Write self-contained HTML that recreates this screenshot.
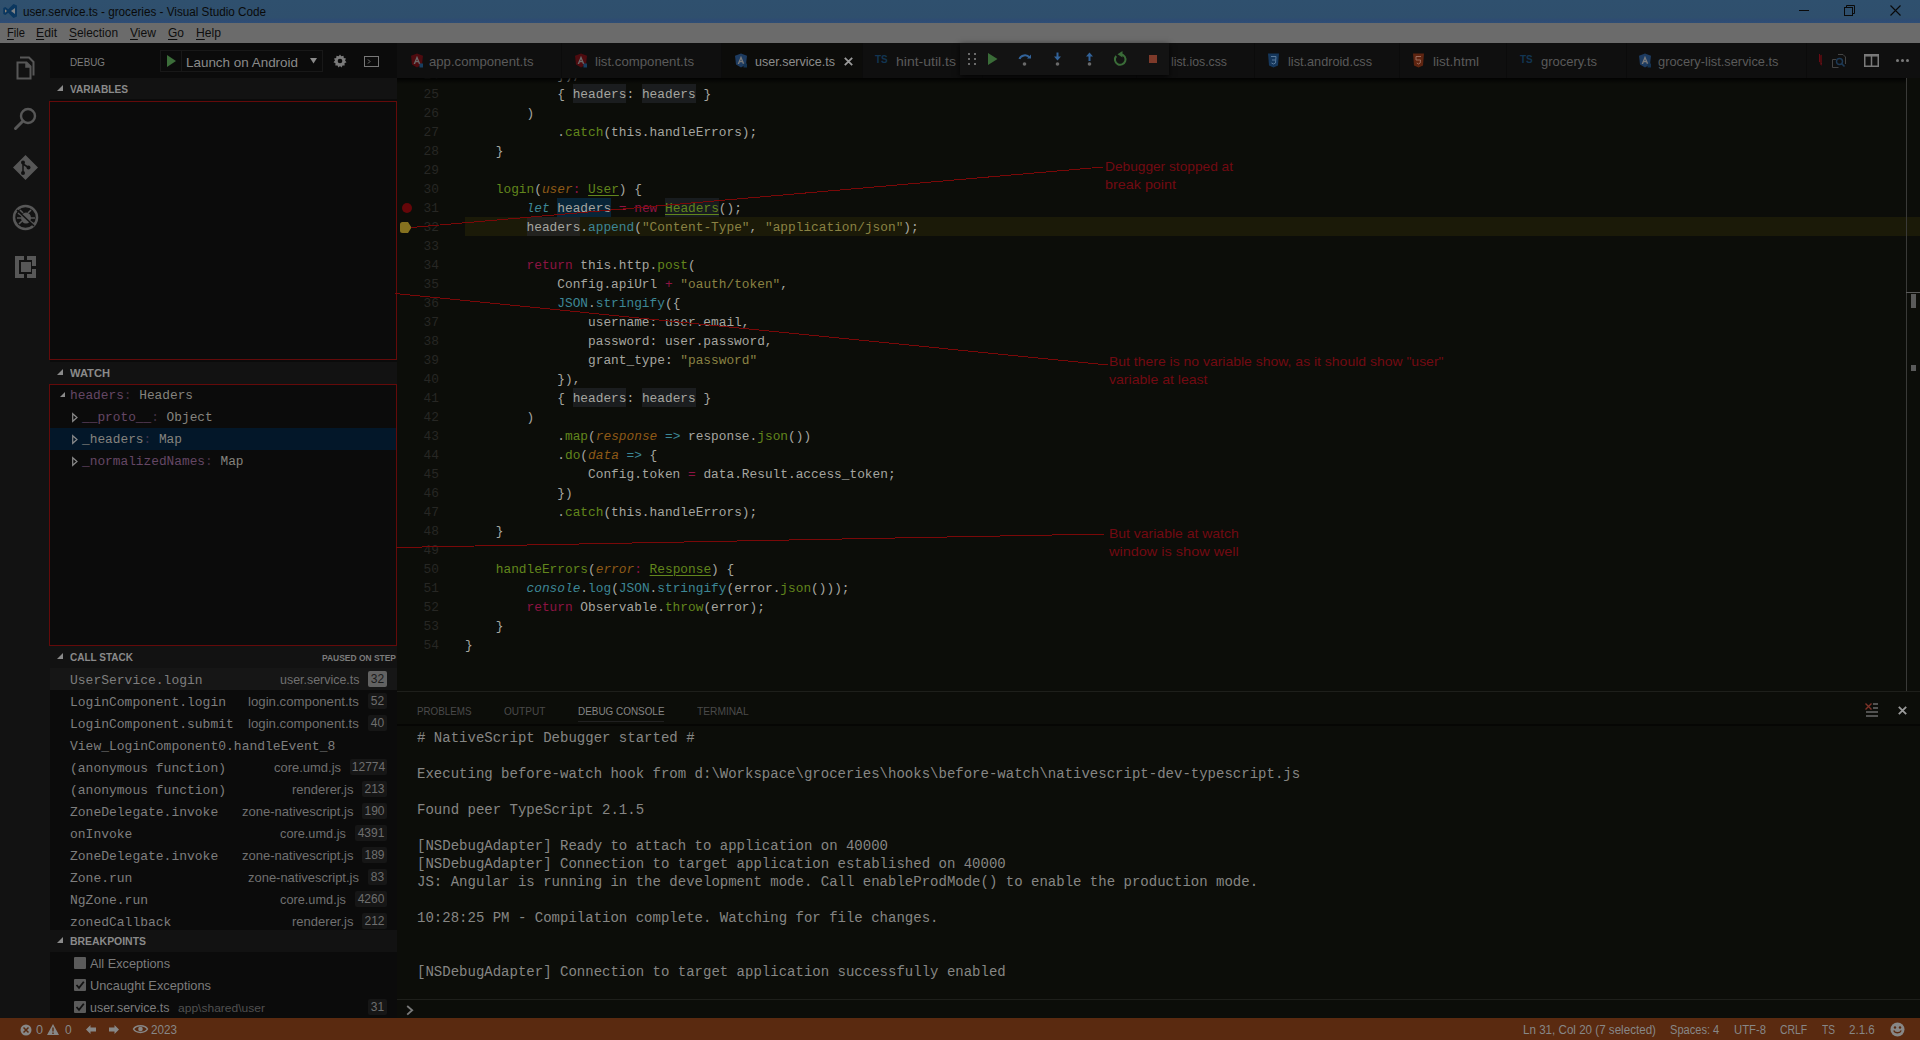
<!DOCTYPE html>
<html><head><meta charset="utf-8"><style>
*{margin:0;padding:0;box-sizing:border-box}
html,body{width:1920px;height:1040px;overflow:hidden;background:#0c0c0a;font-family:"Liberation Sans",sans-serif}
.a{position:absolute}
#title{left:0;top:0;width:1920px;height:23px;background:linear-gradient(#2f506e,#2f4f6d 75%,#2e4b72 88%,#2f4e76)}
#menu{left:0;top:23px;width:1920px;height:20px;background:#6b6b6b}
#act{left:0;top:43px;width:50px;height:975px;background:#121212}
#side{left:50px;top:43px;width:347px;height:975px;background:#0b0b0b}
#editor{left:397px;top:78px;width:1523px;height:613px;background:#0c0d09;overflow:hidden}
#tabs{left:397px;top:43px;width:1523px;height:35px;background:#0f0f0f}
#panel{left:397px;top:691px;width:1523px;height:327px;background:#0c0d09;border-top:1px solid #1e1f1b}
#status{left:0;top:1018px;width:1920px;height:22px;background:#5a2a10}
.code{font-family:"Liberation Mono",monospace;font-size:12.82px;line-height:19px;white-space:pre;color:#a6a6a0}
.ln{font-family:"Liberation Mono",monospace;font-size:12.82px;line-height:19px;color:#272724;text-align:right;width:40px;white-space:pre}
.g{color:#62861c}.p{color:#8e1443}.b{color:#3d8796}.bi{color:#3d8796;font-style:italic}
.o{color:#8f5a17;font-style:italic}.y{color:#8a8243}
.gu{color:#62861c;text-decoration:underline;text-underline-offset:2px}
.guh{color:#62861c;text-decoration:underline;text-underline-offset:2px}
.hl{}.hl2{}.sel{}
.sh{font-family:"Liberation Sans",sans-serif;font-weight:bold;font-size:11px;color:#8a8a8a;line-height:14px;white-space:pre}
.cs{font-family:"Liberation Mono",monospace;font-size:13px;color:#7e7e7e;line-height:22px;white-space:pre}
.fn{font-family:"Liberation Sans",sans-serif;font-size:12.5px;color:#7e7e7e;line-height:22px;white-space:pre}
.badge{font-family:"Liberation Sans",sans-serif;font-size:12px;color:#6e6e6e;background:#161616;line-height:16px;text-align:center;border-radius:2px;white-space:pre}
.tab{font-family:"Liberation Sans",sans-serif;font-size:13px;color:#6e6e6e;line-height:16px;white-space:pre}
.con{font-family:"Liberation Mono",monospace;font-size:14.02px;color:#868684;line-height:18px;white-space:pre}
.st{font-family:"Liberation Sans",sans-serif;font-size:12px;color:#8e8e8e;line-height:16px;white-space:pre}
.ann{font-family:"Liberation Sans",sans-serif;font-size:13px;color:#7a0c14;line-height:18px;white-space:pre}
.wt{font-family:"Liberation Mono",monospace;font-size:12.82px;line-height:22px;white-space:pre}
.wn{color:#654765}.wv{color:#85837e}
.mn{font-family:"Liberation Sans",sans-serif;font-size:12px;color:#111;line-height:16px;white-space:pre}
.tb{font-family:"Liberation Sans",sans-serif;font-size:12px;color:#0c0c0c;line-height:16px;white-space:pre}
svg{position:absolute;overflow:visible}
</style></head><body>
<div id="title" class="a"></div>
<svg style="left:3px;top:4px" width="14" height="14" viewBox="0 0 14 14"><path d="M10.5 0 L14 1.5 V12.5 L10.5 14 L5.2 8.8 L2.3 11 L0.3 10 V4 L2.3 3 L5.2 5.2 Z" fill="#0b375f"/><path d="M12 4 V10 L8 7 Z" fill="#7f8285"/><path d="M2 5.3 V8.7 L4 7 Z" fill="#8a8276"/></svg>
<div class="a" style="left:22.50px;top:5.80px;font-family:Liberation Sans,sans-serif;font-size:12px;line-height:12px;font-weight:normal;color:#0a0a0a;white-space:pre;transform:scaleX(0.9750);transform-origin:0 0;">user.service.ts - groceries - Visual Studio Code</div>
<div class="a" style="left:1799px;top:10px;width:10px;height:1px;background:#0a0a0a"></div>
<svg style="left:1844px;top:5px" width="11" height="11"><rect x="0.5" y="2.5" width="8" height="8" fill="none" stroke="#0a0a0a"/><path d="M2.5 2.5 V0.5 H10.5 V8.5 H8.5" fill="none" stroke="#0a0a0a"/></svg>
<svg style="left:1890px;top:5px" width="11" height="11"><path d="M0.5 0.5 L10.5 10.5 M10.5 0.5 L0.5 10.5" stroke="#0a0a0a" stroke-width="1.1"/></svg>
<div id="menu" class="a"></div>
<div class="a" style="left:6.50px;top:26.80px;font-family:Liberation Sans,sans-serif;font-size:12px;line-height:12px;font-weight:normal;color:#0e0e0e;white-space:pre;transform:scaleX(0.9309);transform-origin:0 0;"><u style="text-decoration-thickness:1px;text-underline-offset:2px">F</u>ile</div>
<div class="a" style="left:35.50px;top:26.80px;font-family:Liberation Sans,sans-serif;font-size:12px;line-height:12px;font-weight:normal;color:#0e0e0e;white-space:pre;transform:scaleX(1.0156);transform-origin:0 0;"><u style="text-decoration-thickness:1px;text-underline-offset:2px">E</u>dit</div>
<div class="a" style="left:68.50px;top:26.80px;font-family:Liberation Sans,sans-serif;font-size:12px;line-height:12px;font-weight:normal;color:#0e0e0e;white-space:pre;transform:scaleX(0.9926);transform-origin:0 0;"><u style="text-decoration-thickness:1px;text-underline-offset:2px">S</u>election</div>
<div class="a" style="left:129.50px;top:26.80px;font-family:Liberation Sans,sans-serif;font-size:12px;line-height:12px;font-weight:normal;color:#0e0e0e;white-space:pre;transform:scaleX(1.0080);transform-origin:0 0;"><u style="text-decoration-thickness:1px;text-underline-offset:2px">V</u>iew</div>
<div class="a" style="left:167.50px;top:26.80px;font-family:Liberation Sans,sans-serif;font-size:12px;line-height:12px;font-weight:normal;color:#0e0e0e;white-space:pre;transform:scaleX(0.9995);transform-origin:0 0;"><u style="text-decoration-thickness:1px;text-underline-offset:2px">G</u>o</div>
<div class="a" style="left:195.50px;top:26.80px;font-family:Liberation Sans,sans-serif;font-size:12px;line-height:12px;font-weight:normal;color:#0e0e0e;white-space:pre;transform:scaleX(1.0129);transform-origin:0 0;"><u style="text-decoration-thickness:1px;text-underline-offset:2px">H</u>elp</div>
<div id="act" class="a"></div>
<svg style="left:16px;top:56px" width="20" height="24" viewBox="0 0 20 24"><path d="M4 1.5 H13 L17.5 6 V19.5" fill="none" stroke="#575757" stroke-width="2"/><path d="M1.5 6.5 H10.5 L14.5 10.5 V22.5 H1.5 Z" fill="none" stroke="#575757" stroke-width="2"/><path d="M10 6 V11 H15" fill="#575757" stroke="#575757" stroke-width="1.5"/></svg>
<svg style="left:13px;top:106px" width="25" height="25" viewBox="0 0 25 25"><circle cx="15" cy="10" r="7" fill="none" stroke="#575757" stroke-width="2.4"/><path d="M10 15 L2.5 22.5" stroke="#575757" stroke-width="3" stroke-linecap="round"/></svg>
<svg style="left:12px;top:154px" width="27" height="27" viewBox="0 0 27 27"><path d="M13.5 1 L26 13.5 L13.5 26 L1 13.5 Z" fill="#575757"/><circle cx="11" cy="8.5" r="2" fill="#121212"/><circle cx="11" cy="19" r="2" fill="#121212"/><circle cx="16.5" cy="13.5" r="2" fill="#121212"/><path d="M11 8.5 V19 M11 10 L16.5 13.5" stroke="#121212" stroke-width="1.5"/></svg>
<svg style="left:12px;top:204px" width="27" height="27" viewBox="0 0 27 27"><circle cx="13.5" cy="13.5" r="11.5" fill="none" stroke="#575757" stroke-width="2.5"/><ellipse cx="14" cy="14" rx="5" ry="5.5" fill="#575757"/><path d="M6 9 L22 20 M8 6 L11 9 M19 6 L16 9 M5 14 H9 M18 14 H23 M7 20 L10 17" stroke="#575757" stroke-width="1.6"/><path d="M5 6 L22 22" stroke="#121212" stroke-width="1.5"/></svg>
<svg style="left:14px;top:255px" width="23" height="24" viewBox="0 0 23 24"><path d="M1 1 H10 V5 H5 V19 H10 V23 H1 Z" fill="#575757"/><path d="M13 1 H22 V11 H18 V5 H13 Z M13 19 H18 V14 H22 V23 H13 Z" fill="#575757"/><rect x="7" y="7" width="10" height="10" fill="#575757"/></svg>
<div id="side" class="a"></div>
<div class="a" style="left:69.50px;top:56.65px;font-family:Liberation Sans,sans-serif;font-size:11px;line-height:11px;font-weight:normal;color:#7d7d7d;white-space:pre;transform:scaleX(0.8947);transform-origin:0 0;">DEBUG</div>
<div class="a" style="left:160px;top:50px;width:163px;height:22px;border:1px solid #181818"></div>
<div class="a" style="left:181px;top:51px;width:1px;height:20px;background:#181818"></div>
<svg style="left:167px;top:55px" width="10" height="12"><path d="M0 0 L9 6 L0 12 Z" fill="#3c6e3a"/></svg>
<div class="a" style="left:185.50px;top:55.95px;font-family:Liberation Sans,sans-serif;font-size:13px;line-height:13px;font-weight:normal;color:#8a8a8a;white-space:pre;transform:scaleX(1.0329);transform-origin:0 0;">Launch on Android</div>
<svg style="left:310px;top:58px" width="7" height="6"><path d="M0 0 H7 L3.5 5.5 Z" fill="#8a8a8a"/></svg>
<svg style="left:333px;top:54px" width="14" height="14" viewBox="0 0 14 14"><path d="M7 0.5 L8.3 2.3 L10.5 1.7 L10.8 3.9 L13 4.5 L12 6.5 L13.5 8.2 L11.5 9.3 L11.7 11.5 L9.5 11.6 L8.5 13.5 L7 12 L5.5 13.5 L4.5 11.6 L2.3 11.5 L2.5 9.3 L0.5 8.2 L2 6.5 L1 4.5 L3.2 3.9 L3.5 1.7 L5.7 2.3 Z" fill="#7a7a7a"/><circle cx="7" cy="7" r="2.3" fill="#0b0b0b"/></svg>
<svg style="left:364px;top:56px" width="15" height="11"><rect x="0.5" y="0.5" width="14" height="10" fill="none" stroke="#777" stroke-width="1"/><path d="M4 3.5 L6 5.5 L4 7.5" fill="none" stroke="#777"/></svg>
<div class="a" style="left:50px;top:78px;width:347px;height:21px;background:#121212"></div>
<svg style="left:57px;top:85px" width="7" height="7"><path d="M6 0 V6 H0 Z" fill="#8a8a8a"/></svg>
<div class="a" style="left:69.50px;top:83.65px;font-family:Liberation Sans,sans-serif;font-size:11px;line-height:11px;font-weight:bold;color:#8a8a8a;white-space:pre;transform:scaleX(0.9243);transform-origin:0 0;">VARIABLES</div>
<div class="a" style="left:49px;top:101px;width:348px;height:259px;border:1px solid #640a0a"></div>
<div class="a" style="left:50px;top:362px;width:347px;height:22px;background:#121212"></div>
<svg style="left:57px;top:369px" width="7" height="7"><path d="M6 0 V6 H0 Z" fill="#8a8a8a"/></svg>
<div class="a" style="left:69.50px;top:367.65px;font-family:Liberation Sans,sans-serif;font-size:11px;line-height:11px;font-weight:bold;color:#8a8a8a;white-space:pre;transform:scaleX(1.0124);transform-origin:0 0;">WATCH</div>
<div class="a" style="left:49px;top:384px;width:348px;height:262px;border:1px solid #640a0a"></div>
<div class="a" style="left:50px;top:428px;width:346px;height:22px;background:#031729"></div>
<svg style="left:60px;top:392px" width="6" height="6"><path d="M5 0 V5 H0 Z" fill="#8a8a8a"/></svg>
<div class="a wt" style="left:70px;top:385px;"><span class="wn">headers</span><span class="wn" style="opacity:.6">:</span> <span class="wv">Headers</span></div>
<svg style="left:72px;top:413px" width="6" height="9"><path d="M0.7 0.7 L5 4.5 L0.7 8.3 Z" fill="none" stroke="#8a8a8a" stroke-width="1.2"/></svg>
<div class="a wt" style="left:82px;top:407px;"><span class="wn">__proto__</span><span class="wn" style="opacity:.6">:</span> <span class="wv">Object</span></div>
<svg style="left:72px;top:435px" width="6" height="9"><path d="M0.7 0.7 L5 4.5 L0.7 8.3 Z" fill="none" stroke="#8a8a8a" stroke-width="1.2"/></svg>
<div class="a wt" style="left:82px;top:429px;"><span class="wv">_headers</span><span class="wn" style="opacity:.6">:</span> <span class="wv">Map</span></div>
<svg style="left:72px;top:457px" width="6" height="9"><path d="M0.7 0.7 L5 4.5 L0.7 8.3 Z" fill="none" stroke="#8a8a8a" stroke-width="1.2"/></svg>
<div class="a wt" style="left:82px;top:451px;"><span class="wn">_normalizedNames</span><span class="wn" style="opacity:.6">:</span> <span class="wv">Map</span></div>
<div class="a" style="left:50px;top:646px;width:347px;height:22px;background:#121212"></div>
<svg style="left:57px;top:653px" width="7" height="7"><path d="M6 0 V6 H0 Z" fill="#8a8a8a"/></svg>
<div class="a" style="left:69.50px;top:651.65px;font-family:Liberation Sans,sans-serif;font-size:11px;line-height:11px;font-weight:bold;color:#8a8a8a;white-space:pre;transform:scaleX(0.9097);transform-origin:0 0;">CALL STACK</div>
<div class="a" style="left:321.50px;top:652.92px;font-family:Liberation Sans,sans-serif;font-size:9.5px;line-height:9.5px;font-weight:bold;color:#7c7c7c;white-space:pre;transform:scaleX(0.8891);transform-origin:0 0;">PAUSED ON STEP</div>
<div class="a" style="left:50px;top:668px;width:347px;height:22px;background:#161616"></div>
<div class="a cs" style="left:70px;top:670px;">UserService.login</div>
<div class="a badge" style="left:368px;top:671px;width:19px;height:16px;background:#626262;color:#1a1a1a;line-height:17px">32</div>
<div class="a" style="left:279.50px;top:673.45px;font-family:Liberation Sans,sans-serif;font-size:13px;line-height:13px;font-weight:normal;color:#707070;white-space:pre;transform:scaleX(0.9568);transform-origin:0 0;">user.service.ts</div>
<div class="a cs" style="left:70px;top:692px;">LoginComponent.login</div>
<div class="a badge" style="left:368px;top:693px;width:19px;height:16px;background:#161616;color:#6e6e6e;line-height:17px">52</div>
<div class="a" style="left:248.10px;top:695.45px;font-family:Liberation Sans,sans-serif;font-size:13px;line-height:13px;font-weight:normal;color:#707070;white-space:pre;transform:scaleX(1.0163);transform-origin:0 0;">login.component.ts</div>
<div class="a cs" style="left:70px;top:714px;">LoginComponent.submit</div>
<div class="a badge" style="left:368px;top:715px;width:19px;height:16px;background:#161616;color:#6e6e6e;line-height:17px">40</div>
<div class="a" style="left:248.10px;top:717.45px;font-family:Liberation Sans,sans-serif;font-size:13px;line-height:13px;font-weight:normal;color:#707070;white-space:pre;transform:scaleX(1.0163);transform-origin:0 0;">login.component.ts</div>
<div class="a cs" style="left:70px;top:736px;">View_LoginComponent0.handleEvent_8</div>
<div class="a cs" style="left:70px;top:758px;">(anonymous function)</div>
<div class="a badge" style="left:350px;top:759px;width:37px;height:16px;background:#161616;color:#6e6e6e;line-height:17px">12774</div>
<div class="a" style="left:274.00px;top:761.45px;font-family:Liberation Sans,sans-serif;font-size:13px;line-height:13px;font-weight:normal;color:#707070;white-space:pre;transform:scaleX(0.9971);transform-origin:0 0;">core.umd.js</div>
<div class="a cs" style="left:70px;top:780px;">(anonymous function)</div>
<div class="a badge" style="left:362px;top:781px;width:25px;height:16px;background:#161616;color:#6e6e6e;line-height:17px">213</div>
<div class="a" style="left:291.50px;top:783.45px;font-family:Liberation Sans,sans-serif;font-size:13px;line-height:13px;font-weight:normal;color:#707070;white-space:pre;transform:scaleX(1.0013);transform-origin:0 0;">renderer.js</div>
<div class="a cs" style="left:70px;top:802px;">ZoneDelegate.invoke</div>
<div class="a badge" style="left:362px;top:803px;width:25px;height:16px;background:#161616;color:#6e6e6e;line-height:17px">190</div>
<div class="a" style="left:241.50px;top:805.45px;font-family:Liberation Sans,sans-serif;font-size:13px;line-height:13px;font-weight:normal;color:#707070;white-space:pre;transform:scaleX(1.0021);transform-origin:0 0;">zone-nativescript.js</div>
<div class="a cs" style="left:70px;top:824px;">onInvoke</div>
<div class="a badge" style="left:355px;top:825px;width:32px;height:16px;background:#161616;color:#6e6e6e;line-height:17px">4391</div>
<div class="a" style="left:280.10px;top:827.45px;font-family:Liberation Sans,sans-serif;font-size:13px;line-height:13px;font-weight:normal;color:#707070;white-space:pre;transform:scaleX(0.9808);transform-origin:0 0;">core.umd.js</div>
<div class="a cs" style="left:70px;top:846px;">ZoneDelegate.invoke</div>
<div class="a badge" style="left:362px;top:847px;width:25px;height:16px;background:#161616;color:#6e6e6e;line-height:17px">189</div>
<div class="a" style="left:241.50px;top:849.45px;font-family:Liberation Sans,sans-serif;font-size:13px;line-height:13px;font-weight:normal;color:#707070;white-space:pre;transform:scaleX(1.0021);transform-origin:0 0;">zone-nativescript.js</div>
<div class="a cs" style="left:70px;top:868px;">Zone.run</div>
<div class="a badge" style="left:368px;top:869px;width:19px;height:16px;background:#161616;color:#6e6e6e;line-height:17px">83</div>
<div class="a" style="left:248.10px;top:871.45px;font-family:Liberation Sans,sans-serif;font-size:13px;line-height:13px;font-weight:normal;color:#707070;white-space:pre;transform:scaleX(0.9967);transform-origin:0 0;">zone-nativescript.js</div>
<div class="a cs" style="left:70px;top:890px;">NgZone.run</div>
<div class="a badge" style="left:355px;top:891px;width:32px;height:16px;background:#161616;color:#6e6e6e;line-height:17px">4260</div>
<div class="a" style="left:280.10px;top:893.45px;font-family:Liberation Sans,sans-serif;font-size:13px;line-height:13px;font-weight:normal;color:#707070;white-space:pre;transform:scaleX(0.9808);transform-origin:0 0;">core.umd.js</div>
<div class="a cs" style="left:70px;top:912px;">zonedCallback</div>
<div class="a badge" style="left:362px;top:913px;width:25px;height:16px;background:#161616;color:#6e6e6e;line-height:17px">212</div>
<div class="a" style="left:291.50px;top:915.45px;font-family:Liberation Sans,sans-serif;font-size:13px;line-height:13px;font-weight:normal;color:#707070;white-space:pre;transform:scaleX(1.0013);transform-origin:0 0;">renderer.js</div>
<div class="a" style="left:50px;top:930px;width:347px;height:22px;background:#121212"></div>
<svg style="left:57px;top:937px" width="7" height="7"><path d="M6 0 V6 H0 Z" fill="#8a8a8a"/></svg>
<div class="a" style="left:69.50px;top:935.65px;font-family:Liberation Sans,sans-serif;font-size:11px;line-height:11px;font-weight:bold;color:#8a8a8a;white-space:pre;transform:scaleX(0.9492);transform-origin:0 0;">BREAKPOINTS</div>
<div class="a" style="left:74px;top:957px;width:12px;height:12px;background:#5b5b5b;border-radius:1px"></div>
<div class="a" style="left:89.50px;top:956.95px;font-family:Liberation Sans,sans-serif;font-size:13px;line-height:13px;font-weight:normal;color:#7c7c7c;white-space:pre;transform:scaleX(0.9798);transform-origin:0 0;">All Exceptions</div>
<div class="a" style="left:74px;top:979px;width:12px;height:12px;background:#5b5b5b;border-radius:1px"></div>
<svg style="left:74px;top:979px" width="12" height="12"><path d="M2.5 6 L5 8.8 L9.8 2.8" fill="none" stroke="#111" stroke-width="1.8"/></svg>
<div class="a" style="left:89.50px;top:978.95px;font-family:Liberation Sans,sans-serif;font-size:13px;line-height:13px;font-weight:normal;color:#7c7c7c;white-space:pre;transform:scaleX(0.9849);transform-origin:0 0;">Uncaught Exceptions</div>
<div class="a" style="left:74px;top:1001px;width:12px;height:12px;background:#5b5b5b;border-radius:1px"></div>
<svg style="left:74px;top:1001px" width="12" height="12"><path d="M2.5 6 L5 8.8 L9.8 2.8" fill="none" stroke="#111" stroke-width="1.8"/></svg>
<div class="a" style="left:89.50px;top:1000.95px;font-family:Liberation Sans,sans-serif;font-size:13px;line-height:13px;font-weight:normal;color:#7c7c7c;white-space:pre;transform:scaleX(0.9568);transform-origin:0 0;">user.service.ts</div>
<div class="a" style="left:177.50px;top:1003.23px;font-family:Liberation Sans,sans-serif;font-size:11.5px;line-height:11.5px;font-weight:normal;color:#505050;white-space:pre;transform:scaleX(1.0468);transform-origin:0 0;">app\shared\user</div>
<div class="a badge" style="left:368px;top:999px;width:19px;height:16px;line-height:17px">31</div>
<div id="tabs" class="a"></div>
<div class="a" style="left:397px;top:43px;width:165px;height:35px;background:#0f0f0f;border-right:1px solid #0b0b0b;overflow:hidden"></div>
<svg style="left:410px;top:53px" width="14" height="15" viewBox="0 0 14 15"><path d="M7 0.5 L13 2.7 L12 11.5 L7 14.5 L2 11.5 L1 2.7 Z" fill="#4e0b0f"/><path d="M7 2.8 L3.6 11 H5.1 L5.8 9.2 H8.2 L8.9 11 H10.4 Z M6.3 8 L7 6.2 L7.7 8 Z" fill="#6a6a6a"/><path d="M9.5 10.5 h3.5 v4 h-3.5z" fill="#173e60"/></svg>
<div class="a" style="left:429.00px;top:54.52px;font-family:Liberation Sans,sans-serif;font-size:13.5px;line-height:13.5px;font-weight:normal;color:#5a5a5a;white-space:pre;transform:scaleX(0.9737);transform-origin:0 0;">app.component.ts</div>
<div class="a" style="left:562px;top:43px;width:160px;height:35px;background:#0f0f0f;border-right:1px solid #0b0b0b;overflow:hidden"></div>
<svg style="left:574px;top:53px" width="14" height="15" viewBox="0 0 14 15"><path d="M7 0.5 L13 2.7 L12 11.5 L7 14.5 L2 11.5 L1 2.7 Z" fill="#4e0b0f"/><path d="M7 2.8 L3.6 11 H5.1 L5.8 9.2 H8.2 L8.9 11 H10.4 Z M6.3 8 L7 6.2 L7.7 8 Z" fill="#6a6a6a"/><path d="M9.5 10.5 h3.5 v4 h-3.5z" fill="#173e60"/></svg>
<div class="a" style="left:594.50px;top:54.52px;font-family:Liberation Sans,sans-serif;font-size:13.5px;line-height:13.5px;font-weight:normal;color:#5a5a5a;white-space:pre;transform:scaleX(0.9773);transform-origin:0 0;">list.component.ts</div>
<div class="a" style="left:722px;top:43px;width:141px;height:35px;background:#0c0c0a;border-right:1px solid #0b0b0b;overflow:hidden"></div>
<svg style="left:734px;top:53px" width="14" height="15" viewBox="0 0 14 15"><path d="M7 0.5 L13 2.7 L12 11.5 L7 14.5 L2 11.5 L1 2.7 Z" fill="#1d3b60"/><path d="M7 2.8 L3.6 11 H5.1 L5.8 9.2 H8.2 L8.9 11 H10.4 Z M6.3 8 L7 6.2 L7.7 8 Z" fill="#7a7a7a"/><path d="M9.5 10.5 h3.5 v4 h-3.5z" fill="#143352"/></svg>
<div class="a" style="left:754.50px;top:54.52px;font-family:Liberation Sans,sans-serif;font-size:13.5px;line-height:13.5px;font-weight:normal;color:#8c8c8c;white-space:pre;transform:scaleX(0.9272);transform-origin:0 0;">user.service.ts</div>
<div class="a" style="left:863px;top:43px;width:120px;height:35px;background:#0f0f0f;border-right:1px solid #0b0b0b;overflow:hidden"></div>
<div class="a" style="left:875px;top:55px;font-family:Liberation Sans,sans-serif;font-weight:bold;font-size:10px;color:#123552;line-height:10px">TS</div>
<div class="a" style="left:895.50px;top:54.52px;font-family:Liberation Sans,sans-serif;font-size:13.5px;line-height:13.5px;font-weight:normal;color:#5a5a5a;white-space:pre;transform:scaleX(1.0386);transform-origin:0 0;">hint-util.ts</div>
<div class="a" style="left:983px;top:43px;width:154px;height:35px;background:#0f0f0f;border-right:1px solid #0b0b0b;overflow:hidden"></div>
<svg style="left:995px;top:53px" width="13" height="15" viewBox="0 0 12 15"><path d="M0.5 0.5 H11.5 L10.5 12.5 L6 14.5 L1.5 12.5 Z" fill="#15375c"/><path d="M3.5 3.5 H8.5 L8 10 L6 11 L4 10 M4.5 7 H8" fill="none" stroke="#5a7a9a" stroke-width="1"/></svg>
<div class="a" style="left:1014.50px;top:54.52px;font-family:Liberation Sans,sans-serif;font-size:13.5px;line-height:13.5px;font-weight:normal;color:#5a5a5a;white-space:pre;transform:scaleX(1.1131);transform-origin:0 0;">list.comp.css</div>
<div class="a" style="left:1137px;top:43px;width:118px;height:35px;background:#0f0f0f;border-right:1px solid #0b0b0b;overflow:hidden"></div>
<svg style="left:1150px;top:53px" width="13" height="15" viewBox="0 0 12 15"><path d="M0.5 0.5 H11.5 L10.5 12.5 L6 14.5 L1.5 12.5 Z" fill="#15375c"/><path d="M3.5 3.5 H8.5 L8 10 L6 11 L4 10 M4.5 7 H8" fill="none" stroke="#5a7a9a" stroke-width="1"/></svg>
<div class="a" style="left:1170.50px;top:54.52px;font-family:Liberation Sans,sans-serif;font-size:13.5px;line-height:13.5px;font-weight:normal;color:#5a5a5a;white-space:pre;transform:scaleX(0.9104);transform-origin:0 0;">list.ios.css</div>
<div class="a" style="left:1255px;top:43px;width:145px;height:35px;background:#0f0f0f;border-right:1px solid #0b0b0b;overflow:hidden"></div>
<svg style="left:1267px;top:53px" width="13" height="15" viewBox="0 0 12 15"><path d="M0.5 0.5 H11.5 L10.5 12.5 L6 14.5 L1.5 12.5 Z" fill="#15375c"/><path d="M3.5 3.5 H8.5 L8 10 L6 11 L4 10 M4.5 7 H8" fill="none" stroke="#5a7a9a" stroke-width="1"/></svg>
<div class="a" style="left:1287.50px;top:54.52px;font-family:Liberation Sans,sans-serif;font-size:13.5px;line-height:13.5px;font-weight:normal;color:#5a5a5a;white-space:pre;transform:scaleX(0.9408);transform-origin:0 0;">list.android.css</div>
<div class="a" style="left:1400px;top:43px;width:107px;height:35px;background:#0f0f0f;border-right:1px solid #0b0b0b;overflow:hidden"></div>
<svg style="left:1412px;top:53px" width="13" height="15" viewBox="0 0 12 15"><path d="M0.5 0.5 H11.5 L10.5 12.5 L6 14.5 L1.5 12.5 Z" fill="#5e2410"/><path d="M8.5 3.5 H3.5 V7 H8 L7.7 10 L6 11 L4.3 10" fill="none" stroke="#9a6a5a" stroke-width="1"/></svg>
<div class="a" style="left:1432.50px;top:54.52px;font-family:Liberation Sans,sans-serif;font-size:13.5px;line-height:13.5px;font-weight:normal;color:#5a5a5a;white-space:pre;transform:scaleX(1.0054);transform-origin:0 0;">list.html</div>
<div class="a" style="left:1507px;top:43px;width:120px;height:35px;background:#0f0f0f;border-right:1px solid #0b0b0b;overflow:hidden"></div>
<div class="a" style="left:1520px;top:55px;font-family:Liberation Sans,sans-serif;font-weight:bold;font-size:10px;color:#123552;line-height:10px">TS</div>
<div class="a" style="left:1540.50px;top:54.52px;font-family:Liberation Sans,sans-serif;font-size:13.5px;line-height:13.5px;font-weight:normal;color:#5a5a5a;white-space:pre;transform:scaleX(0.9611);transform-origin:0 0;">grocery.ts</div>
<div class="a" style="left:1627px;top:43px;width:180px;height:35px;background:#0f0f0f;border-right:1px solid #0b0b0b;overflow:hidden"></div>
<svg style="left:1638px;top:53px" width="14" height="15" viewBox="0 0 14 15"><path d="M7 0.5 L13 2.7 L12 11.5 L7 14.5 L2 11.5 L1 2.7 Z" fill="#1d3b60"/><path d="M7 2.8 L3.6 11 H5.1 L5.8 9.2 H8.2 L8.9 11 H10.4 Z M6.3 8 L7 6.2 L7.7 8 Z" fill="#7a7a7a"/><path d="M9.5 10.5 h3.5 v4 h-3.5z" fill="#143352"/></svg>
<div class="a" style="left:1657.50px;top:54.52px;font-family:Liberation Sans,sans-serif;font-size:13.5px;line-height:13.5px;font-weight:normal;color:#5a5a5a;white-space:pre;transform:scaleX(0.9505);transform-origin:0 0;">grocery-list.service.ts</div>
<div class="a" style="left:1807px;top:43px;width:23px;height:35px;background:#0f0f0f;border-right:1px solid #0b0b0b;overflow:hidden"></div>
<svg style="left:1818px;top:53px" width="14" height="15" viewBox="0 0 14 15"><path d="M7 0.5 L13 2.7 L12 11.5 L7 14.5 L2 11.5 L1 2.7 Z" fill="#4e0b0f"/><path d="M7 2.8 L3.6 11 H5.1 L5.8 9.2 H8.2 L8.9 11 H10.4 Z M6.3 8 L7 6.2 L7.7 8 Z" fill="#6a6a6a"/><path d="M9.5 10.5 h3.5 v4 h-3.5z" fill="#173e60"/></svg>
<svg style="left:844px;top:57px" width="9" height="9"><path d="M0.8 0.8 L8.2 8.2 M8.2 0.8 L0.8 8.2" stroke="#9a9a9a" stroke-width="1.8"/></svg>
<div class="a" style="left:1822px;top:43px;width:98px;height:35px;background:#0f0f0f"></div>
<div class="a" style="left:1819px;top:54px;width:1px;height:8px;background:#6a0a14"></div>
<svg style="left:1831px;top:53px" width="16" height="16" viewBox="0 0 16 16"><path d="M1.5 6.5 H5 M1.5 6.5 V14.5 H7.5 M7 1.5 H12 L14.5 4 V11" fill="none" stroke="#444" stroke-width="1"/><circle cx="8.5" cy="8.5" r="3" fill="none" stroke="#1e3a56" stroke-width="1.4"/><path d="M10.5 10.5 L13.5 13.5" stroke="#1e3a56" stroke-width="1.6"/></svg>
<svg style="left:1864px;top:54px" width="15" height="13"><rect x="0.75" y="0.75" width="13.5" height="11.5" fill="none" stroke="#7a7a7a" stroke-width="1.5"/><path d="M7.5 1 V12" stroke="#7a7a7a" stroke-width="1.5"/><path d="M1 1.8 H14" stroke="#7a7a7a" stroke-width="1.5"/></svg>
<div class="a" style="left:1896px;top:59px;width:3px;height:3px;border-radius:50%;background:#7a7a7a"></div>
<div class="a" style="left:1901px;top:59px;width:3px;height:3px;border-radius:50%;background:#7a7a7a"></div>
<div class="a" style="left:1906px;top:59px;width:3px;height:3px;border-radius:50%;background:#7a7a7a"></div>
<div class="a" style="left:960px;top:43px;width:209px;height:32px;background:#131313;box-shadow:0 2px 6px rgba(0,0,0,.8)"></div>
<div class="a" style="left:968px;top:53px;width:2px;height:2px;background:#6a6a6a"></div>
<div class="a" style="left:974px;top:53px;width:2px;height:2px;background:#6a6a6a"></div>
<div class="a" style="left:968px;top:58px;width:2px;height:2px;background:#6a6a6a"></div>
<div class="a" style="left:974px;top:58px;width:2px;height:2px;background:#6a6a6a"></div>
<div class="a" style="left:968px;top:63px;width:2px;height:2px;background:#6a6a6a"></div>
<div class="a" style="left:974px;top:63px;width:2px;height:2px;background:#6a6a6a"></div>
<svg style="left:988px;top:53px" width="10" height="12"><path d="M0 0 L9.5 6 L0 12 Z" fill="#3a6c38"/></svg>
<svg style="left:1018px;top:52px" width="14" height="15" viewBox="0 0 14 15"><path d="M1.5 7 C2.5 3 9 2 11.5 5.5" fill="none" stroke="#32639a" stroke-width="2"/><path d="M9 6.5 L13 6.5 L13 2.5 Z" fill="#32639a"/><circle cx="6.5" cy="12" r="1.8" fill="#6a6a6a"/></svg>
<svg style="left:1052px;top:52px" width="11" height="15" viewBox="0 0 11 15"><path d="M5.5 0.5 V6" stroke="#32639a" stroke-width="2"/><path d="M2 4.5 L5.5 8.5 L9 4.5 Z" fill="#32639a"/><circle cx="5.5" cy="12" r="1.8" fill="#6a6a6a"/></svg>
<svg style="left:1084px;top:52px" width="11" height="15" viewBox="0 0 11 15"><path d="M5.5 3 V9" stroke="#32639a" stroke-width="2"/><path d="M2 4.5 L5.5 0.5 L9 4.5 Z" fill="#32639a"/><circle cx="5.5" cy="12" r="1.8" fill="#6a6a6a"/></svg>
<svg style="left:1113px;top:51px" width="15" height="16" viewBox="0 0 15 16"><path d="M3.2 5 A5.3 5.3 0 1 0 8 3.2" fill="none" stroke="#3a6c38" stroke-width="2"/><path d="M9.5 0 L9.5 6.5 L4.5 3.2 Z" fill="#3a6c38"/></svg>
<div class="a" style="left:1149px;top:55px;width:8px;height:8px;background:#7e3a2a"></div>
<div id="editor" class="a">
<div class="a" style="left:68px;top:139px;width:1455px;height:19px;background:#1b1a08"></div>
<div class="a" style="left:175.66px;top:6px;width:53.83px;height:19px;background:#1b1d1f"></div>
<div class="a" style="left:244.87px;top:6px;width:53.83px;height:19px;background:#1b1d1f"></div>
<div class="a" style="left:175.66px;top:310px;width:53.83px;height:19px;background:#1b1d1f"></div>
<div class="a" style="left:244.87px;top:310px;width:53.83px;height:19px;background:#1b1d1f"></div>
<div class="a" style="left:160.28px;top:120px;width:53.83px;height:19px;background:#082538"></div>
<div class="a" style="left:267.94px;top:120px;width:53.83px;height:19px;background:#181c1f"></div>
<div class="a" style="left:129.52px;top:139px;width:53.83px;height:19px;background:#22221f"></div>
<div class="a ln" style="left:2px;top:-12px">24</div>
<div class="a code" style="left:68px;top:-12px">            }),</div>
<div class="a ln" style="left:2px;top:7px">25</div>
<div class="a code" style="left:68px;top:7px">            { <span class="hl">headers</span>: <span class="hl">headers</span> }</div>
<div class="a ln" style="left:2px;top:26px">26</div>
<div class="a code" style="left:68px;top:26px">        )</div>
<div class="a ln" style="left:2px;top:45px">27</div>
<div class="a code" style="left:68px;top:45px">            .<span class="g">catch</span>(this.handleErrors);</div>
<div class="a ln" style="left:2px;top:64px">28</div>
<div class="a code" style="left:68px;top:64px">    }</div>
<div class="a ln" style="left:2px;top:83px">29</div>
<div class="a code" style="left:68px;top:83px"></div>
<div class="a ln" style="left:2px;top:102px">30</div>
<div class="a code" style="left:68px;top:102px">    <span class="g">login</span>(<span class="o">user</span><span class="p">:</span> <span class="gu">User</span>) {</div>
<div class="a ln" style="left:2px;top:121px">31</div>
<div class="a code" style="left:68px;top:121px">        <span class="bi">let</span> <span class="sel">headers</span> <span class="p">=</span> <span class="p">new</span> <span class="guh">Headers</span>();</div>
<div class="a ln" style="left:2px;top:140px">32</div>
<div class="a code" style="left:68px;top:140px">        <span class="hl2">headers</span>.<span class="b">append</span>(<span class="y">&quot;Content-Type&quot;</span>, <span class="y">&quot;application/json&quot;</span>);</div>
<div class="a ln" style="left:2px;top:159px">33</div>
<div class="a code" style="left:68px;top:159px"></div>
<div class="a ln" style="left:2px;top:178px">34</div>
<div class="a code" style="left:68px;top:178px">        <span class="p">return</span> this.http.<span class="g">post</span>(</div>
<div class="a ln" style="left:2px;top:197px">35</div>
<div class="a code" style="left:68px;top:197px">            Config.apiUrl <span class="p">+</span> <span class="y">&quot;oauth/token&quot;</span>,</div>
<div class="a ln" style="left:2px;top:216px">36</div>
<div class="a code" style="left:68px;top:216px">            <span class="b">JSON</span>.<span class="b">stringify</span>({</div>
<div class="a ln" style="left:2px;top:235px">37</div>
<div class="a code" style="left:68px;top:235px">                username: user.email,</div>
<div class="a ln" style="left:2px;top:254px">38</div>
<div class="a code" style="left:68px;top:254px">                password: user.password,</div>
<div class="a ln" style="left:2px;top:273px">39</div>
<div class="a code" style="left:68px;top:273px">                grant_type: <span class="y">&quot;password&quot;</span></div>
<div class="a ln" style="left:2px;top:292px">40</div>
<div class="a code" style="left:68px;top:292px">            }),</div>
<div class="a ln" style="left:2px;top:311px">41</div>
<div class="a code" style="left:68px;top:311px">            { <span class="hl">headers</span>: <span class="hl">headers</span> }</div>
<div class="a ln" style="left:2px;top:330px">42</div>
<div class="a code" style="left:68px;top:330px">        )</div>
<div class="a ln" style="left:2px;top:349px">43</div>
<div class="a code" style="left:68px;top:349px">            .<span class="g">map</span>(<span class="o">response</span> <span class="b">=&gt;</span> response.<span class="g">json</span>())</div>
<div class="a ln" style="left:2px;top:368px">44</div>
<div class="a code" style="left:68px;top:368px">            .<span class="g">do</span>(<span class="o">data</span> <span class="b">=&gt;</span> {</div>
<div class="a ln" style="left:2px;top:387px">45</div>
<div class="a code" style="left:68px;top:387px">                Config.token <span class="p">=</span> data.Result.access_token;</div>
<div class="a ln" style="left:2px;top:406px">46</div>
<div class="a code" style="left:68px;top:406px">            })</div>
<div class="a ln" style="left:2px;top:425px">47</div>
<div class="a code" style="left:68px;top:425px">            .<span class="g">catch</span>(this.handleErrors);</div>
<div class="a ln" style="left:2px;top:444px">48</div>
<div class="a code" style="left:68px;top:444px">    }</div>
<div class="a ln" style="left:2px;top:463px">49</div>
<div class="a code" style="left:68px;top:463px"></div>
<div class="a ln" style="left:2px;top:482px">50</div>
<div class="a code" style="left:68px;top:482px">    <span class="g">handleErrors</span>(<span class="o">error</span><span class="p">:</span> <span class="gu">Response</span>) {</div>
<div class="a ln" style="left:2px;top:501px">51</div>
<div class="a code" style="left:68px;top:501px">        <span class="bi">console</span>.<span class="b">log</span>(<span class="b">JSON</span>.<span class="b">stringify</span>(error.<span class="g">json</span>()));</div>
<div class="a ln" style="left:2px;top:520px">52</div>
<div class="a code" style="left:68px;top:520px">        <span class="p">return</span> Observable.<span class="g">throw</span>(error);</div>
<div class="a ln" style="left:2px;top:539px">53</div>
<div class="a code" style="left:68px;top:539px">    }</div>
<div class="a ln" style="left:2px;top:558px">54</div>
<div class="a code" style="left:68px;top:558px">}</div>
<div class="a" style="left:5px;top:125px;width:10px;height:10px;border-radius:50%;background:#650609"></div>
<svg style="left:3px;top:144px" width="12" height="11"><path d="M2.5 0 H8 L11.5 5.5 L8 11 H2.5 A2.5 2.5 0 0 1 0 8.5 V2.5 A2.5 2.5 0 0 1 2.5 0 Z" fill="#85711f"/></svg>
<div class="a" style="left:1509px;top:0;width:1px;height:613px;background:#3a3a38"></div>
<div class="a" style="left:1514px;top:216px;width:5px;height:14px;background:#5a5a5a"></div>
<div class="a" style="left:1509px;top:214px;width:14px;height:1px;background:#5a5a5a"></div>
<div class="a" style="left:1514px;top:287px;width:5px;height:6px;background:#5a5a5a"></div>
<div class="a" style="left:1510px;top:139px;width:13px;height:19px;background:#1b1a08"></div>
</div>
<div class="a" style="left:397px;top:78px;width:1509px;height:6px;background:linear-gradient(rgba(0,0,0,.85),rgba(0,0,0,0))"></div>
<div id="panel" class="a"></div>
<div class="a" style="left:416.50px;top:705.65px;font-family:Liberation Sans,sans-serif;font-size:11px;line-height:11px;font-weight:normal;color:#4a4a4a;white-space:pre;transform:scaleX(0.8915);transform-origin:0 0;">PROBLEMS</div>
<div class="a" style="left:503.50px;top:705.65px;font-family:Liberation Sans,sans-serif;font-size:11px;line-height:11px;font-weight:normal;color:#4a4a4a;white-space:pre;transform:scaleX(0.9155);transform-origin:0 0;">OUTPUT</div>
<div class="a" style="left:577.50px;top:705.65px;font-family:Liberation Sans,sans-serif;font-size:11px;line-height:11px;font-weight:normal;color:#858585;white-space:pre;transform:scaleX(0.9013);transform-origin:0 0;">DEBUG CONSOLE</div>
<div class="a" style="left:696.50px;top:705.65px;font-family:Liberation Sans,sans-serif;font-size:11px;line-height:11px;font-weight:normal;color:#4a4a4a;white-space:pre;transform:scaleX(0.9277);transform-origin:0 0;">TERMINAL</div>
<div class="a" style="left:578px;top:721px;width:86px;height:1px;background:#202020"></div>
<div class="a" style="left:397px;top:724px;width:1523px;height:2px;background:rgba(0,0,0,.5)"></div>
<svg style="left:1864px;top:702px" width="16" height="16"><path d="M9 2 H14 M9 6 H14 M2 10 H14 M2 14 H14" stroke="#6a6a6a" stroke-width="1.6"/><path d="M1.5 1.5 L7.5 7.5 M7.5 1.5 L1.5 7.5" stroke="#7e3329" stroke-width="1.4"/></svg>
<svg style="left:1898px;top:706px" width="9" height="9"><path d="M0.8 0.8 L8.2 8.2 M8.2 0.8 L0.8 8.2" stroke="#9a9a9a" stroke-width="1.8"/></svg>
<div class="a con" style="left:417px;top:729px;"># NativeScript Debugger started #</div>
<div class="a con" style="left:417px;top:765px;">Executing before-watch hook from d:\Workspace\groceries\hooks\before-watch\nativescript-dev-typescript.js</div>
<div class="a con" style="left:417px;top:801px;">Found peer TypeScript 2.1.5</div>
<div class="a con" style="left:417px;top:837px;">[NSDebugAdapter] Ready to attach to application on 40000</div>
<div class="a con" style="left:417px;top:855px;">[NSDebugAdapter] Connection to target application established on 40000</div>
<div class="a con" style="left:417px;top:873px;">JS: Angular is running in the development mode. Call enableProdMode() to enable the production mode.</div>
<div class="a con" style="left:417px;top:909px;">10:28:25 PM - Compilation complete. Watching for file changes.</div>
<div class="a con" style="left:417px;top:963px;">[NSDebugAdapter] Connection to target application successfully enabled</div>
<div class="a" style="left:397px;top:999px;width:1523px;height:1px;background:#1e1f1b"></div>
<svg style="left:406px;top:1005px" width="8" height="11"><path d="M1.2 1 L6.2 5.2 L1.2 9.6" fill="none" stroke="#7a7a7a" stroke-width="1.8"/></svg>
<svg style="left:0;top:0" width="1920" height="1040"><g stroke="#7a0808" stroke-width="1" fill="none" shape-rendering="crispEdges"><path d="M411 227.5 L1103 167"/><path d="M395 293.5 L1108 365"/><path d="M396 547.5 L1105 534"/></g></svg>
<div class="a" style="left:1104.50px;top:159.95px;font-family:Liberation Sans,sans-serif;font-size:13px;line-height:13px;font-weight:normal;color:#720a12;white-space:pre;transform:scaleX(1.0541);transform-origin:0 0;">Debugger stopped at</div>
<div class="a" style="left:1104.50px;top:177.95px;font-family:Liberation Sans,sans-serif;font-size:13px;line-height:13px;font-weight:normal;color:#720a12;white-space:pre;transform:scaleX(1.1038);transform-origin:0 0;">break point</div>
<div class="a" style="left:1109.00px;top:354.95px;font-family:Liberation Sans,sans-serif;font-size:13px;line-height:13px;font-weight:normal;color:#720a12;white-space:pre;transform:scaleX(1.0746);transform-origin:0 0;">But there is no variable show, as it should show &quot;user&quot;</div>
<div class="a" style="left:1109.00px;top:372.95px;font-family:Liberation Sans,sans-serif;font-size:13px;line-height:13px;font-weight:normal;color:#720a12;white-space:pre;transform:scaleX(1.0818);transform-origin:0 0;">variable at least</div>
<div class="a" style="left:1108.50px;top:526.95px;font-family:Liberation Sans,sans-serif;font-size:13px;line-height:13px;font-weight:normal;color:#720a12;white-space:pre;transform:scaleX(1.0748);transform-origin:0 0;">But variable at watch</div>
<div class="a" style="left:1108.50px;top:544.95px;font-family:Liberation Sans,sans-serif;font-size:13px;line-height:13px;font-weight:normal;color:#720a12;white-space:pre;transform:scaleX(1.1150);transform-origin:0 0;">window is show well</div>
<div id="status" class="a"></div>
<svg style="left:20px;top:1024px" width="12" height="12"><circle cx="6" cy="6" r="5.5" fill="#878787"/><path d="M3.5 3.5 L8.5 8.5 M8.5 3.5 L3.5 8.5" stroke="#5a2a10" stroke-width="1.5"/></svg>
<div class="a" style="left:35.50px;top:1023.54px;font-family:Liberation Sans,sans-serif;font-size:12.3px;line-height:12.3px;font-weight:normal;color:#878787;white-space:pre;transform:scaleX(1.0233);transform-origin:0 0;">0</div>
<svg style="left:47px;top:1024px" width="12" height="11"><path d="M6 0 L12 11 H0 Z" fill="#878787"/><path d="M6 3.5 V7.5 M6 8.5 V10" stroke="#5a2a10" stroke-width="1.4"/></svg>
<div class="a" style="left:64.50px;top:1023.54px;font-family:Liberation Sans,sans-serif;font-size:12.3px;line-height:12.3px;font-weight:normal;color:#878787;white-space:pre;transform:scaleX(0.9794);transform-origin:0 0;">0</div>
<svg style="left:86px;top:1025px" width="10" height="9"><path d="M0 4.5 L4.5 0 V2.5 H10 V6.5 H4.5 V9 Z" fill="#878787"/></svg>
<svg style="left:109px;top:1025px" width="10" height="9"><path d="M10 4.5 L5.5 0 V2.5 H0 V6.5 H5.5 V9 Z" fill="#878787"/></svg>
<svg style="left:133px;top:1024px" width="15" height="10"><path d="M0.5 5 C3 0.5 12 0.5 14.5 5 C12 9.5 3 9.5 0.5 5 Z" fill="none" stroke="#878787" stroke-width="1.5"/><circle cx="7.5" cy="5" r="2.3" fill="#878787"/></svg>
<div class="a" style="left:150.50px;top:1023.54px;font-family:Liberation Sans,sans-serif;font-size:12.3px;line-height:12.3px;font-weight:normal;color:#878787;white-space:pre;transform:scaleX(0.9502);transform-origin:0 0;">2023</div>
<div class="a" style="left:1522.50px;top:1023.54px;font-family:Liberation Sans,sans-serif;font-size:12.3px;line-height:12.3px;font-weight:normal;color:#878787;white-space:pre;transform:scaleX(0.9443);transform-origin:0 0;">Ln 31, Col 20 (7 selected)</div>
<div class="a" style="left:1670.00px;top:1023.54px;font-family:Liberation Sans,sans-serif;font-size:12.3px;line-height:12.3px;font-weight:normal;color:#878787;white-space:pre;transform:scaleX(0.9003);transform-origin:0 0;">Spaces: 4</div>
<div class="a" style="left:1734.00px;top:1023.54px;font-family:Liberation Sans,sans-serif;font-size:12.3px;line-height:12.3px;font-weight:normal;color:#878787;white-space:pre;transform:scaleX(0.9183);transform-origin:0 0;">UTF-8</div>
<div class="a" style="left:1780.00px;top:1023.54px;font-family:Liberation Sans,sans-serif;font-size:12.3px;line-height:12.3px;font-weight:normal;color:#878787;white-space:pre;transform:scaleX(0.8484);transform-origin:0 0;">CRLF</div>
<div class="a" style="left:1821.50px;top:1023.54px;font-family:Liberation Sans,sans-serif;font-size:12.3px;line-height:12.3px;font-weight:normal;color:#878787;white-space:pre;transform:scaleX(0.8271);transform-origin:0 0;">TS</div>
<div class="a" style="left:1848.50px;top:1023.54px;font-family:Liberation Sans,sans-serif;font-size:12.3px;line-height:12.3px;font-weight:normal;color:#878787;white-space:pre;transform:scaleX(0.9413);transform-origin:0 0;">2.1.6</div>
<svg style="left:1890px;top:1022px" width="15" height="15"><circle cx="7.5" cy="7.5" r="7" fill="#878787"/><circle cx="5" cy="5.5" r="1.2" fill="#5a2a10"/><circle cx="10" cy="5.5" r="1.2" fill="#5a2a10"/><path d="M3.8 8.5 C5 11.5 10 11.5 11.2 8.5" fill="none" stroke="#5a2a10" stroke-width="1.3"/></svg>
</body></html>
